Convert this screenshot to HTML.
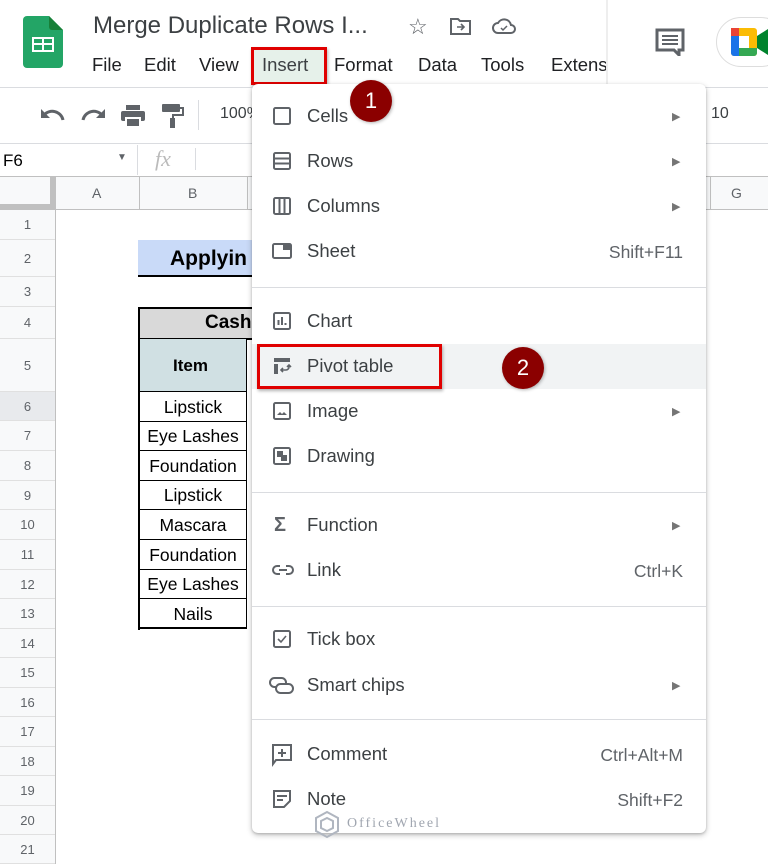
<!DOCTYPE html>
<html><head><meta charset="utf-8">
<style>
*{margin:0;padding:0;box-sizing:border-box}
body{width:768px;height:864px;overflow:hidden;background:#fff;font-family:"Liberation Sans",Arial,sans-serif;position:relative;color:#202124}
.a{position:absolute}
.mi{position:absolute;left:307px;font-size:18.5px;color:#3c4043;line-height:20px}
.sc{position:absolute;right:85px;font-size:17.5px;color:#5f6368}
.ar{position:absolute;left:672px;font-size:11px;color:#757575}
.ic{position:absolute;left:272px}
.sep{position:absolute;left:252px;width:454px;height:1px;background:#dadce0}
.rn{position:absolute;left:0;width:55px;text-align:center;font-size:13px;color:#5f6368;border-bottom:1px solid #e0e0e0;background:#f8f9fa}
.cell{position:absolute;left:139px;width:108px;border:1px solid #000;border-top:none;text-align:center;font-size:17.5px;color:#000}
</style></head><body>
<!-- header -->
<svg class="a" style="left:23px;top:16px" width="40" height="52" viewBox="0 0 40 52"><path d="M4 0h22l14 14v34a4 4 0 0 1-4 4H4a4 4 0 0 1-4-4V4a4 4 0 0 1 4-4z" fill="#23a566"/><path d="M26 0l14 14H29a3 3 0 0 1-3-3z" fill="#188038"/><rect x="9" y="21" width="22" height="15" fill="#fff"/><rect x="11" y="23" width="8" height="4" fill="#23a566"/><rect x="21" y="23" width="8" height="4" fill="#23a566"/><rect x="11" y="29" width="8" height="5" fill="#23a566"/><rect x="21" y="29" width="8" height="5" fill="#23a566"/></svg>
<div class="a" style="left:93px;top:12px;font-size:24px;color:#3c4043">Merge Duplicate Rows I...</div>
<div class="a" style="left:408px;top:14px;font-size:22px;color:#5f6368">☆</div>
<svg class="a" style="left:450px;top:17px" width="22" height="18" viewBox="0 0 22 18"><path d="M1 2h7l2 2h10v13H1z" fill="none" stroke="#5f6368" stroke-width="2"/><path d="M7 10h7M11 7l3 3-3 3" stroke="#5f6368" stroke-width="1.6" fill="none"/></svg>
<svg class="a" style="left:492px;top:18px" width="24" height="17" viewBox="0 0 24 17"><path d="M6 15a5 5 0 0 1 0-10 7 7 0 0 1 13 2 4 4 0 0 1 0 8z" fill="none" stroke="#5f6368" stroke-width="2"/><path d="M9 10l2 2 4-4" stroke="#5f6368" stroke-width="1.5" fill="none"/></svg>
<div class="a" style="top:54px;left:92px;font-size:18.5px;color:#202124">File</div>
<div class="a" style="top:54px;left:144px;font-size:18.5px">Edit</div>
<div class="a" style="top:54px;left:199px;font-size:18.5px">View</div>
<div class="a" style="left:251px;top:47px;width:76px;height:38px;border:3px solid #e00000;background:#e6f1ea;box-shadow:1px 2px 3px rgba(0,0,0,.3)"></div>
<div class="a" style="top:54px;left:262px;font-size:18.5px;color:#3c4043">Insert</div>
<div class="a" style="top:54px;left:334px;font-size:18.5px">Format</div>
<div class="a" style="top:54px;left:418px;font-size:18.5px">Data</div>
<div class="a" style="top:54px;left:481px;font-size:18.5px">Tools</div>
<div class="a" style="top:54px;left:551px;font-size:18.5px;width:56px;overflow:hidden;white-space:nowrap">Extensions</div>
<div class="a" style="left:606px;top:0;width:2px;height:86px;background:#eee"></div>
<svg class="a" style="left:655px;top:28px" width="30" height="28" viewBox="0 0 30 28"><path d="M2 2h26v20h-4v5l-5-5H2z" fill="#fff" stroke="#5f6368" stroke-width="3"/><path d="M7 8h16M7 12h16M7 16h16" stroke="#5f6368" stroke-width="2"/></svg>
<div class="a" style="left:716px;top:17px;width:70px;height:50px;border:1px solid #ddd;border-radius:25px"></div>
<svg class="a" style="left:731px;top:28px" width="37" height="28" viewBox="0 0 37 28"><rect x="0" y="0" width="26" height="28" rx="3" fill="#fbbc04"/><path d="M0 8L8 0v28H3a3 3 0 0 1-3-3z" fill="#1a73e8"/><path d="M0 0h8v8H0z" fill="#ea4335"/><path d="M8 20h18v5a3 3 0 0 1-3 3H8z" fill="#34a853"/><path d="M26 8l11-7v26l-11-7z" fill="#00832d"/><rect x="8" y="8" width="10" height="12" fill="#fff"/></svg>
<!-- toolbar -->
<div class="a" style="left:0;top:87px;width:768px;height:1px;background:#dadce0"></div>
<svg class="a" style="left:41px;top:107px" width="24" height="16" viewBox="0 0 24 16"><path d="M3 8a11 11 0 0 1 19 5" stroke="#5f6368" stroke-width="3" fill="none"/><path d="M0 2v9h9z" fill="#5f6368"/></svg>
<svg class="a" style="left:81px;top:107px" width="24" height="16" viewBox="0 0 24 16"><path d="M21 8a11 11 0 0 0-19 5" stroke="#5f6368" stroke-width="3" fill="none"/><path d="M24 2v9h-9z" fill="#5f6368"/></svg>
<svg class="a" style="left:121px;top:105px" width="24" height="22" viewBox="0 0 24 22"><rect x="5" y="0" width="14" height="5" fill="#5f6368"/><rect x="0" y="6" width="24" height="10" rx="2" fill="#5f6368"/><rect x="5" y="13" width="14" height="9" fill="#5f6368" stroke="#fff" stroke-width="2"/></svg>
<svg class="a" style="left:162px;top:104px" width="22" height="24" viewBox="0 0 22 24"><rect x="0" y="0" width="18" height="8" rx="1" fill="#5f6368"/><path d="M18 4h3v7h-10v3" stroke="#5f6368" stroke-width="2" fill="none"/><rect x="8" y="14" width="5" height="10" fill="#5f6368"/></svg>
<div class="a" style="left:198px;top:100px;width:1px;height:30px;background:#dadce0"></div>
<div class="a" style="left:220px;top:105px;font-size:16px;color:#3c4043">100%</div>
<div class="a" style="left:711px;top:105px;font-size:16px;color:#3c4043">10</div>
<div class="a" style="left:0;top:143px;width:768px;height:1px;background:#dadce0"></div>
<!-- formula bar -->
<div class="a" style="left:3px;top:151px;font-size:17px;color:#000">F6</div>
<div class="a" style="left:117px;top:152px;font-size:10px;color:#5f6368">▼</div>
<div class="a" style="left:137px;top:145px;width:1px;height:30px;background:#dadce0"></div>
<div class="a" style="left:155px;top:146px;font-size:22px;color:#bbb;font-style:italic;font-family:'Liberation Serif',serif">fx</div>
<div class="a" style="left:195px;top:148px;width:1px;height:22px;background:#dadce0"></div>
<!-- column header -->
<div class="a" style="left:0;top:176px;width:768px;height:34px;background:#f8f9fa;border-top:1px solid #c0c0c0;border-bottom:1px solid #c0c0c0"></div>
<div class="a" style="left:50px;top:176px;width:6px;height:34px;background:#c0c0c0"></div>
<div class="a" style="left:0;top:204px;width:56px;height:6px;background:#c0c0c0"></div>
<div class="a" style="left:139px;top:177px;width:1px;height:33px;background:#c0c0c0"></div>
<div class="a" style="left:247px;top:177px;width:1px;height:33px;background:#c0c0c0"></div>
<div class="a" style="left:710px;top:177px;width:1px;height:33px;background:#c0c0c0"></div>
<div class="a" style="left:92px;top:185px;font-size:14px;color:#5f6368">A</div>
<div class="a" style="left:188px;top:185px;font-size:14px;color:#5f6368">B</div>
<div class="a" style="left:731px;top:185px;font-size:14px;color:#5f6368">G</div>
<!-- row headers -->
<div class="a" style="left:55px;top:210px;width:1px;height:654px;background:#c0c0c0"></div>
<div class="rn" style="top:210px;height:30px;line-height:30px">1</div>
<div class="rn" style="top:240px;height:37px;line-height:37px">2</div>
<div class="rn" style="top:277px;height:30px;line-height:30px">3</div>
<div class="rn" style="top:307px;height:32px;line-height:32px">4</div>
<div class="rn" style="top:339px;height:53px;line-height:53px">5</div>
<div class="rn" style="top:392px;height:29px;line-height:29px;background:#e8eaed">6</div>
<div class="rn" style="top:421px;height:30px;line-height:30px">7</div>
<div class="rn" style="top:451px;height:30px;line-height:30px">8</div>
<div class="rn" style="top:481px;height:29px;line-height:29px">9</div>
<div class="rn" style="top:510px;height:30px;line-height:30px">10</div>
<div class="rn" style="top:540px;height:30px;line-height:30px">11</div>
<div class="rn" style="top:570px;height:29px;line-height:29px">12</div>
<div class="rn" style="top:599px;height:30px;line-height:30px">13</div>
<div class="rn" style="top:629px;height:29px;line-height:29px">14</div>
<div class="rn" style="top:658px;height:30px;line-height:30px">15</div>
<div class="rn" style="top:688px;height:29px;line-height:29px">16</div>
<div class="rn" style="top:717px;height:30px;line-height:30px">17</div>
<div class="rn" style="top:747px;height:29px;line-height:29px">18</div>
<div class="rn" style="top:776px;height:30px;line-height:30px">19</div>
<div class="rn" style="top:806px;height:29px;line-height:29px">20</div>
<div class="rn" style="top:835px;height:29px;line-height:29px">21</div>
<!-- sheet content -->
<div class="a" style="left:138px;top:240px;width:115px;height:37px;background:#c9daf8;border-bottom:2px solid #000"></div>
<div class="a" style="left:170px;top:247px;font-size:21px;font-weight:bold;color:#000">Applyin</div>
<div class="a" style="left:138px;top:307px;width:115px;height:33px;background:#d9d9d9;border:2px solid #000;border-right:none"></div>
<div class="a" style="left:205px;top:312px;font-size:19px;font-weight:bold;color:#000">Cash</div>
<div class="a" style="left:139px;top:339px;width:108px;height:53px;background:#d0e0e3;border:1px solid #000;border-top:none"></div>
<div class="a" style="left:173px;top:356px;font-size:17px;font-weight:bold;color:#000">Item</div>
<div class="a" style="left:138px;top:339px;width:2px;height:291px;background:#000"></div>
<div class="cell" style="top:392px;height:30px;line-height:30px">Lipstick</div>
<div class="cell" style="top:422px;height:29px;line-height:29px">Eye Lashes</div>
<div class="cell" style="top:451px;height:30px;line-height:30px">Foundation</div>
<div class="cell" style="top:481px;height:29px;line-height:29px">Lipstick</div>
<div class="cell" style="top:510px;height:30px;line-height:30px">Mascara</div>
<div class="cell" style="top:540px;height:30px;line-height:30px">Foundation</div>
<div class="cell" style="top:570px;height:29px;line-height:29px">Eye Lashes</div>
<div class="cell" style="top:599px;height:30px;line-height:30px;border-bottom:2px solid #000">Nails</div>
<!-- menu -->
<div class="a" style="left:252px;top:84px;width:454px;height:749px;background:#fff;border-radius:6px;box-shadow:0 2px 6px rgba(0,0,0,.25),0 1px 2px rgba(0,0,0,.15)"></div>
<div class="a" style="left:252px;top:344px;width:454px;height:45px;background:#f1f3f4"></div>
<div class="sep" style="top:287px"></div>
<div class="sep" style="top:492px"></div>
<div class="sep" style="top:606px"></div>
<div class="sep" style="top:719px"></div>
<svg class="ic" style="top:106px" width="20" height="20"><rect x="2" y="2" width="16" height="16" rx="1.5" fill="none" stroke="#5f6368" stroke-width="2"/></svg>
<div class="mi" style="top:106px">Cells</div><div class="ar" style="top:110px">▶</div>
<svg class="ic" style="top:151px" width="20" height="20"><rect x="2" y="2" width="16" height="16" rx="1.5" fill="none" stroke="#5f6368" stroke-width="2"/><path d="M2 7.5h16M2 12.5h16" stroke="#5f6368" stroke-width="2"/></svg>
<div class="mi" style="top:151px">Rows</div><div class="ar" style="top:155px">▶</div>
<svg class="ic" style="top:196px" width="20" height="20"><rect x="2" y="2" width="16" height="16" rx="1.5" fill="none" stroke="#5f6368" stroke-width="2"/><path d="M7.5 2v16M12.5 2v16" stroke="#5f6368" stroke-width="2"/></svg>
<div class="mi" style="top:196px">Columns</div><div class="ar" style="top:200px">▶</div>
<svg class="ic" style="top:241px" width="20" height="20"><rect x="1" y="3" width="18" height="14" rx="1.5" fill="none" stroke="#5f6368" stroke-width="2"/><rect x="11" y="3" width="8" height="6" fill="#5f6368"/></svg>
<div class="mi" style="top:241px">Sheet</div><div class="sc" style="top:242px">Shift+F11</div>
<svg class="ic" style="top:311px" width="20" height="20"><rect x="2" y="2" width="16" height="16" rx="1.5" fill="none" stroke="#5f6368" stroke-width="2"/><path d="M6.5 14V9M10 14V6M13.5 14v-2" stroke="#5f6368" stroke-width="2"/></svg>
<div class="mi" style="top:311px">Chart</div>
<div class="a" style="left:257px;top:344px;width:185px;height:45px;border:3px solid #e00000;box-shadow:1px 2px 3px rgba(0,0,0,.3)"></div>
<svg class="ic" style="top:356px" width="20" height="20"><rect x="2" y="2" width="16" height="4" fill="#5f6368"/><rect x="2" y="8" width="4" height="10" fill="#5f6368"/><path d="M9 14h5a3 3 0 0 0 3-3V9M15 11l2-2 2 2M11 12l-2 2 2 2" stroke="#5f6368" stroke-width="1.6" fill="none"/></svg>
<div class="mi" style="top:356px">Pivot table</div>
<svg class="ic" style="top:401px" width="20" height="20"><rect x="2" y="2" width="16" height="16" rx="1.5" fill="none" stroke="#5f6368" stroke-width="2"/><path d="M5 14l3-3 2 2 2-2 3 3z" fill="#5f6368"/></svg>
<div class="mi" style="top:401px">Image</div><div class="ar" style="top:405px">▶</div>
<svg class="ic" style="top:446px" width="20" height="20"><rect x="2" y="2" width="16" height="16" rx="1.5" fill="none" stroke="#5f6368" stroke-width="2"/><rect x="5" y="5" width="6" height="6" fill="#5f6368"/><rect x="9" y="9" width="6" height="6" fill="#5f6368"/></svg>
<div class="mi" style="top:446px">Drawing</div>
<div class="ic" style="top:514px;left:274px;font-size:20px;color:#5f6368;font-weight:bold">Σ</div>
<div class="mi" style="top:515px">Function</div><div class="ar" style="top:519px">▶</div>
<svg class="ic" style="top:560px" width="22" height="20"><path d="M8 6H5a4 4 0 0 0 0 8h3M14 6h3a4 4 0 0 1 0 8h-3M7 10h8" stroke="#5f6368" stroke-width="2" fill="none"/></svg>
<div class="mi" style="top:560px">Link</div><div class="sc" style="top:561px">Ctrl+K</div>
<svg class="ic" style="top:629px" width="20" height="20"><rect x="2" y="2" width="16" height="16" rx="1.5" fill="none" stroke="#5f6368" stroke-width="2"/><path d="M6 10l3 3 5-6" stroke="#5f6368" stroke-width="1.6" fill="none"/></svg>
<div class="mi" style="top:629px">Tick box</div>
<svg class="ic" style="top:675px;left:269px" width="26" height="20"><rect x="1" y="3" width="16" height="9" rx="4.5" fill="none" stroke="#5f6368" stroke-width="2"/><rect x="7" y="9" width="17" height="9" rx="4.5" fill="#fff" stroke="#5f6368" stroke-width="2"/></svg>
<div class="mi" style="top:675px">Smart chips</div><div class="ar" style="top:679px">▶</div>
<svg class="ic" style="top:743px;left:271px" width="22" height="24"><path d="M2 2h18v15H5l-3 4z" fill="none" stroke="#5f6368" stroke-width="2"/><path d="M11 6v8M7 10h8" stroke="#5f6368" stroke-width="2"/></svg>
<div class="mi" style="top:744px">Comment</div><div class="sc" style="top:745px">Ctrl+Alt+M</div>
<svg class="ic" style="top:789px" width="20" height="20"><path d="M2 2h16v10l-6 6H2z" fill="none" stroke="#5f6368" stroke-width="2"/><path d="M5 7h10M5 11h6" stroke="#5f6368" stroke-width="2"/></svg>
<div class="mi" style="top:789px">Note</div><div class="sc" style="top:790px">Shift+F2</div>
<!-- watermark -->
<svg class="a" style="left:313px;top:810px" width="28" height="30"><path d="M14 2l11 6v13l-11 6-11-6V8z" fill="none" stroke="#b0b6c0" stroke-width="2"/><path d="M14 8l6 3v7l-6 3-6-3v-7z" fill="none" stroke="#b0b6c0" stroke-width="2"/></svg>
<div class="a" style="left:347px;top:816px;font-size:14px;letter-spacing:2px;color:#a0a6b0;font-family:'Liberation Serif',serif">OfficeWheel</div>
<!-- badges -->
<div class="a" style="left:350px;top:80px;width:42px;height:42px;border-radius:50%;background:#8b0000;color:#fff;font-size:22px;text-align:center;line-height:42px;box-shadow:1px 1px 3px rgba(0,0,0,.3)">1</div>
<div class="a" style="left:502px;top:347px;width:42px;height:42px;border-radius:50%;background:#8b0000;color:#fff;font-size:22px;text-align:center;line-height:42px;box-shadow:1px 1px 3px rgba(0,0,0,.3)">2</div>
</body></html>
